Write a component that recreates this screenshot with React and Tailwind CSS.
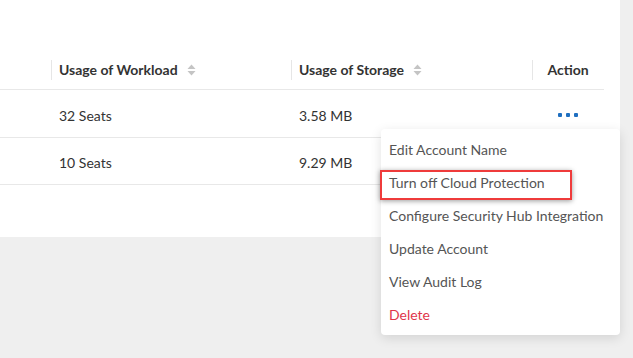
import React from "react";

function SortIcon() {
  return (
    <svg width="9" height="12" viewBox="0 0 9 12" className="ml-[9px]">
      <path d="M4.5 0.5 L8.5 5 L0.5 5 Z" fill="#c4c4c4" />
      <path d="M4.5 11.5 L8.5 7 L0.5 7 Z" fill="#c4c4c4" />
    </svg>
  );
}

function HeaderCell({ children, sort, center }) {
  return (
    <div className={`relative flex items-center h-full ${center ? "" : "pl-2"}`}>
      <div className="absolute left-0 top-1/2 -translate-y-1/2 w-px h-[20px] bg-[#e6e6e6]" />
      <div className={`flex items-center ${center ? "w-full justify-center" : ""}`}>
        <span>{children}</span>
        {sort && <SortIcon />}
      </div>
    </div>
  );
}

const items = [
  "Edit Account Name",
  "Turn off Cloud Protection",
  "Configure Security Hub Integration",
  "Update Account",
  "View Audit Log",
  "Delete",
];

export default function App() {
  return (
    <div
      className="relative w-[633px] h-[358px] bg-[#efefef] overflow-hidden text-[14px]"
      style={{ fontFamily: "Lato, 'Open Sans', sans-serif" }}
    >
      <div className="w-[620px] h-[237px] bg-white pt-[50px] pr-[16px]">
        <div className="grid grid-cols-[51px_240px_241px_72px] h-[40px] border-b border-[#e8e8e8] text-[#333] font-bold">
          <div />
          <HeaderCell sort>Usage of Workload</HeaderCell>
          <HeaderCell sort>Usage of Storage</HeaderCell>
          <HeaderCell center>Action</HeaderCell>
        </div>
        <div className="grid grid-cols-[51px_240px_241px_72px] h-[48px] items-center pt-[3px] border-b border-[#e8e8e8] text-[#333]">
          <div />
          <div className="pl-2">32 Seats</div>
          <div className="pl-2">3.58 MB</div>
          <div className="flex justify-center gap-[4px] pr-[1px]">
            <span className="w-[4px] h-[4px] bg-[#1f6fc0] rounded-[1px]" />
            <span className="w-[4px] h-[4px] bg-[#1f6fc0] rounded-[1px]" />
            <span className="w-[4px] h-[4px] bg-[#1f6fc0] rounded-[1px]" />
          </div>
        </div>
        <div className="grid grid-cols-[51px_240px_241px_72px] h-[47px] items-center pt-[2px] border-b border-[#e8e8e8] text-[#333]">
          <div />
          <div className="pl-2">10 Seats</div>
          <div className="pl-2">9.29 MB</div>
          <div />
        </div>
      </div>

      <div className="absolute left-[381px] top-[129px] w-[239px] bg-white rounded-[4px] shadow-[0_3px_12px_rgba(0,0,0,0.12)] py-[4px]">
        {items.map((t) => (
          <div
            key={t}
            className={`h-[33px] flex items-center pl-[8px] whitespace-nowrap ${
              t === "Delete" ? "text-[#e0364b]" : "text-[#555]"
            }`}
          >
            {t}
          </div>
        ))}
        <div className="absolute left-[-1px] top-[41px] w-[192px] h-[30px] border-2 border-[#ef3b3b] shadow-[0_1px_5px_rgba(0,0,0,0.4)]" />
      </div>
    </div>
  );
}
